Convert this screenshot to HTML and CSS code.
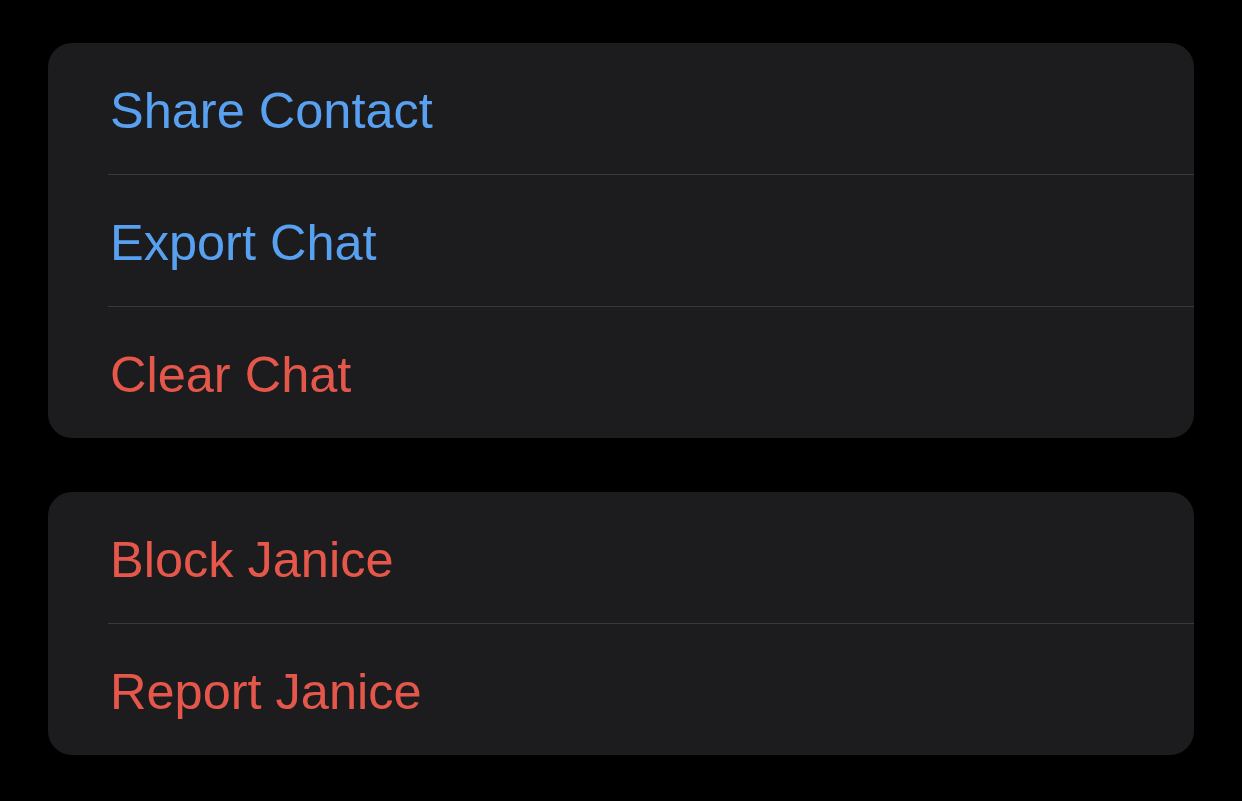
FILE: index.html
```html
<!DOCTYPE html>
<html>
<head>
<meta charset="utf-8">
<link rel="stylesheet" href="styles.css">
</head>
<body>
<div class="page">
  <div class="group">
    <div class="row blue"><span>Share Contact</span></div>
    <div class="row blue"><span>Export Chat</span></div>
    <div class="row red"><span>Clear Chat</span></div>
  </div>
  <div class="group">
    <div class="row red"><span>Block Janice</span></div>
    <div class="row red"><span>Report Janice</span></div>
  </div>
</div>
</body>
</html>
```
FILE: styles.css
```css
html, body {
  margin: 0;
  padding: 0;
  background: #000;
}
body {
  width: 1242px;
  height: 801px;
  overflow: hidden;
  font-family: "Liberation Sans", Arial, sans-serif;
}
.page {
  padding: 43px 48px 0 48px;
  display: flex;
  flex-direction: column;
  gap: 54px;
}
.group {
  background: #1c1c1e;
  border-radius: 24px;
  overflow: hidden;
}
.row {
  margin-left: 60px;
  padding-left: 2px;
  height: 132px;
  box-sizing: border-box;
  padding-top: 4px;
  line-height: 127px;
  font-size: 50.5px;
  white-space: nowrap;
}
.row + .row {
  border-top: 1px solid #38383a;
  height: 132px;
}
.row:first-child {
  height: 131px;
}
.blue { color: #58a0f0; }
.red { color: #e6574b; }
```
